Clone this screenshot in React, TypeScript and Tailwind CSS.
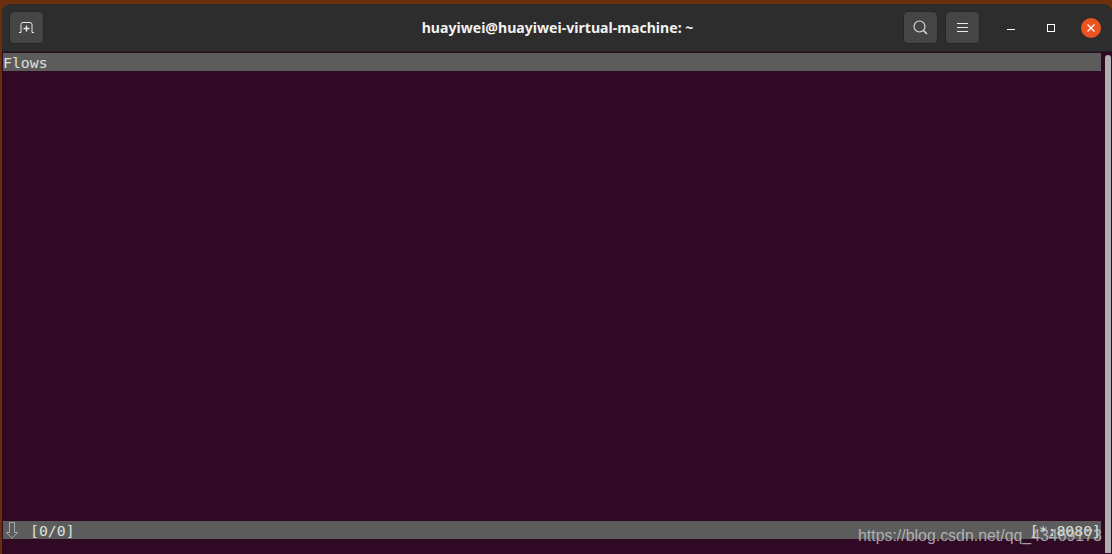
function TitleButton({ children }: { children: React.ReactNode }) {
  return (
    <button
      type="button"
      className="grid h-[33px] w-[35px] place-items-center rounded-[5px] border border-[#262626] bg-[#454545] text-[#e6e6e6]"
    >
      {children}
    </button>
  );
}

export default function App() {
  return (
    <div className="flex h-[554px] w-[1112px] flex-col overflow-hidden bg-[#6b2f0c] pl-[2px] pt-[4px]">
      <div className="flex min-h-0 flex-1 flex-col overflow-hidden rounded-t-[8px] bg-[#2d2d2d]">
        <header className="grid h-[48px] shrink-0 grid-cols-[1fr_auto_1fr] items-center border-b border-[#1f1f1f] pl-[7px] pr-[11px] font-['Noto_Sans',sans-serif]">
          <div className="justify-self-start">
            <TitleButton>
              <svg width="15" height="11" viewBox="0 0 15 11" fill="none" stroke="#e8e8e8" strokeWidth="1">
                <path d="M0 10.5h2V2.5a2 2 0 0 1 2-2h7a2 2 0 0 1 2 2v8h2" />
                <path d="M7.5 3.5v6M4.5 6.5h6" strokeWidth="1.4" />
              </svg>
            </TitleButton>
          </div>
          <div className="pl-[5px] text-[14.1px] font-bold text-[#f2f2f2]">huayiwei@huayiwei-virtual-machine: ~</div>
          <div className="flex items-center justify-self-end">
            <TitleButton>
              <svg width="15" height="15" viewBox="0 0 15 15" fill="none" stroke="#e0e0e0" strokeWidth="1.1">
                <circle cx="6.5" cy="6.5" r="5.5" />
                <path d="M10.5 10.5l3.5 3.5" strokeWidth="1.5" />
              </svg>
            </TitleButton>
            <div className="ml-[7px]">
              <TitleButton>
                <svg width="11" height="9" viewBox="0 0 11 9" stroke="#e8e8e8" strokeWidth="1">
                  <path d="M0 0.5h11M0 4.5h11M0 8.5h11" />
                </svg>
              </TitleButton>
            </div>
            <div className="ml-[27px] mt-[4px] h-[1px] w-[8px] bg-white" />
            <div className="ml-[32px] h-[8px] w-[8px] border border-white" />
            <div className="ml-[26px] grid h-[20px] w-[20px] place-items-center rounded-full bg-[#e95420]">
              <svg width="8" height="8" viewBox="0 0 8 8" stroke="#ffffff" strokeWidth="1.3">
                <path d="M0.5 0.5l7 7M7.5 0.5l-7 7" />
              </svg>
            </div>
          </div>
        </header>
        <main className="flex min-h-0 flex-1 bg-[#300a24] pt-[1px] font-['DejaVu_Sans_Mono',monospace] text-[14.8px] leading-[18px] text-[#dde1da]">
          <div className="flex min-w-0 flex-1 flex-col justify-between pb-[15px] pl-px">
            <div className="h-[18px] bg-[#5c5c5c] pt-px">Flows</div>
            <div className="flex h-[18px] items-center justify-between bg-[#5c5c5c] pt-px">
              <div className="flex items-center">
                <svg className="ml-[3px] -mt-px" width="12" height="17" viewBox="0 0 12 17" fill="none" stroke="#a8a8a8" strokeWidth="1">
                  <path d="M3.5 0.5h5v10h3L6 16.3 0.5 10.5h3z" />
                </svg>
                <span className="ml-[12px]">[0/0]</span>
              </div>
              <span>[*:8080]</span>
            </div>
          </div>
          <div className="mb-px ml-[4px] mr-[1px] mt-[2px] w-[6px] shrink-0 self-stretch rounded-t-[3px] bg-[#b0b0b0]" />
        </main>
      </div>
      <span className="pointer-events-none absolute left-[858px] top-[527px] font-['Liberation_Sans',sans-serif] text-[15.9px] leading-[18px] text-[#c8c8c8]/80">
        https://blog.csdn.net/qq_43469173
      </span>
    </div>
  );
}
